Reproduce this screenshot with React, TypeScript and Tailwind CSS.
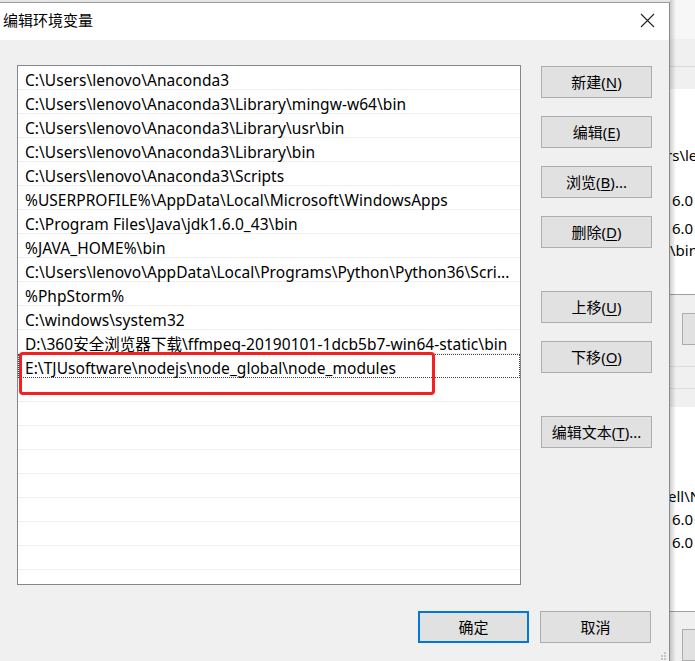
const paths = [
  "C:\\Users\\lenovo\\Anaconda3",
  "C:\\Users\\lenovo\\Anaconda3\\Library\\mingw-w64\\bin",
  "C:\\Users\\lenovo\\Anaconda3\\Library\\usr\\bin",
  "C:\\Users\\lenovo\\Anaconda3\\Library\\bin",
  "C:\\Users\\lenovo\\Anaconda3\\Scripts",
  "%USERPROFILE%\\AppData\\Local\\Microsoft\\WindowsApps",
  "C:\\Program Files\\Java\\jdk1.6.0_43\\bin",
  "%JAVA_HOME%\\bin",
  "C:\\Users\\lenovo\\AppData\\Local\\Programs\\Python\\Python36\\Scri...",
  "%PhpStorm%",
  "C:\\windows\\system32",
  "D:\\360安全浏览器下载\\ffmpeg-20190101-1dcb5b7-win64-static\\bin",
  "E:\\TJUsoftware\\nodejs\\node_global\\node_modules",
];

const emptyRows = Array.from({ length: 9 }, (_, i) => i);

const Btn = ({
  label,
  mnemonic,
  suffix = "",
  primary = false,
}: {
  label: string;
  mnemonic?: string;
  suffix?: string;
  primary?: boolean;
}) => (
  <div
    className={
      primary
        ? "w-[111px] h-[32px] flex items-center justify-center bg-[#e1e1e1] border-2 border-[#0078d7] text-[15px] text-black"
        : "w-[111px] h-[32px] flex items-center justify-center bg-[#e1e1e1] border border-[#adadad] text-[15px] text-black"
    }
  >
    <span>
      {label}
      {mnemonic && (
        <>
          (<span className="underline underline-offset-2">{mnemonic}</span>)
        </>
      )}
      {suffix}
    </span>
  </div>
);

const App = () => {
  return (
    <div
      className="w-[695px] h-[661px] flex overflow-hidden bg-[#f0f0f0] text-black"
      style={{ fontFamily: '"Noto Sans", "Noto Sans CJK SC", sans-serif' }}
    >
      {/* dialog */}
      <div className="w-[670px] flex flex-col shrink-0">
        <div className="h-[3px] bg-[#e6e6e6] border-b border-[#9a9a9a]" />
        <div className="flex-1 flex flex-col border-r border-[#8a8a8a] bg-[#f0f0f0]">
          {/* title bar */}
          <div className="h-[37px] bg-white flex items-center justify-between pl-[3px] pr-[14px]">
            <span className="text-[15px] leading-none -mt-[2px]">编辑环境变量</span>
            <svg width="15" height="15" viewBox="0 0 15 15" className="-mt-[2px]">
              <path d="M1 1 L14 14 M14 1 L1 14" stroke="#222" strokeWidth="1.1" />
            </svg>
          </div>

          {/* body */}
          <div className="flex pl-[17px] pt-[25px] gap-[20px]">
            <div className="relative w-[504px] h-[520px] bg-white border border-[#828790] overflow-hidden">
              {paths.map((p, i) => (
                <div
                  key={i}
                  className={
                    i === paths.length - 1
                      ? "h-[24px] pl-[6px] pt-[4px] border border-dotted border-[#444] text-[15.5px] leading-[18px] tracking-[0.05px] whitespace-nowrap"
                      : "h-[24px] pl-[7px] pt-[5px] border-b border-[#efefef] text-[15.5px] leading-[18px] tracking-[0.05px] whitespace-nowrap"
                  }
                >
                  {p}
                </div>
              ))}
              {emptyRows.map((i) => (
                <div key={i} className="h-[24px] border-b border-[#efefef]" />
              ))}
              <div className="absolute left-[1px] top-[286px] w-[416px] h-[43px] border-[3px] border-[#f51f1f] rounded-[4px]" />
            </div>

            <div className="flex flex-col pt-[1px]">
              <div className="flex flex-col gap-[18px]">
                <Btn label="新建" mnemonic="N" />
                <Btn label="编辑" mnemonic="E" />
                <Btn label="浏览" mnemonic="B" suffix="..." />
                <Btn label="删除" mnemonic="D" />
              </div>
              <div className="flex flex-col gap-[18px] mt-[43px]">
                <Btn label="上移" mnemonic="U" />
                <Btn label="下移" mnemonic="O" />
              </div>
              <div className="mt-[43px]">
                <Btn label="编辑文本" mnemonic="T" suffix="..." />
              </div>
            </div>
          </div>

          {/* footer */}
          <div className="flex justify-end gap-[11px] pr-[18px] mt-[26px]">
            <Btn label="确定" primary />
            <Btn label="取消" />
          </div>
          <div className="flex-1 flex justify-end items-end pr-[2px] pb-[1px]">
            <svg width="8" height="8" viewBox="0 0 8 8">
              <rect x="5" y="0" width="2" height="2" fill="#c4c4c4" />
              <rect x="2" y="3" width="2" height="2" fill="#c4c4c4" />
              <rect x="5" y="3" width="2" height="2" fill="#c4c4c4" />
              <rect x="2" y="6" width="2" height="2" fill="#c4c4c4" />
              <rect x="5" y="6" width="2" height="2" fill="#c4c4c4" />
            </svg>
          </div>
        </div>
      </div>

      {/* window behind */}
      <div className="relative flex-1 flex flex-col text-[15px] leading-none whitespace-nowrap overflow-hidden">
        <div className="h-[40px] bg-[#f7f7f7]" />
        <div className="h-[28px] bg-[#f0f0f0] border-b border-[#d9d9d9]" />
        <div className="h-[22px] bg-[#f0f0f0]" />
        <div className="h-[208px] bg-white flex flex-col">
          <span className="mt-[59px] -ml-[4px]">rs\le</span>
          <span className="mt-[30px] ml-[2px]">6.0</span>
          <span className="mt-[13px] ml-[2px]">6.0</span>
          <span className="mt-[7px]">\bin</span>
        </div>
        <div className="h-[115px] bg-[#f0f0f0] border-t border-[#a0a0a0] flex flex-col">
          <div className="ml-[12px] mt-[18px] w-[40px] h-[32px] bg-[#e1e1e1] border border-[#adadad]" />
          <div className="mt-[21px] border-t border-[#dcdcdc]" />
          <div className="mt-[21px] border-t border-[#dcdcdc]" />
        </div>
        <div className="h-[207px] bg-white flex flex-col">
          <span className="mt-[82px] -ml-[2px]">ell\N</span>
          <span className="mt-[8px] ml-[2px]">6.0</span>
          <span className="mt-[8px] ml-[2px]">6.0</span>
        </div>
        <div className="flex-1 bg-[#f0f0f0] border-t border-[#a0a0a0]">
          <div className="ml-[12px] mt-[17px] w-[40px] h-[32px] bg-[#e1e1e1] border border-[#adadad]" />
        </div>
        <div className="absolute left-0 top-0 bottom-0 w-[6px] bg-gradient-to-r from-[#00000030] to-transparent" />
      </div>
    </div>
  );
};

export default App;
